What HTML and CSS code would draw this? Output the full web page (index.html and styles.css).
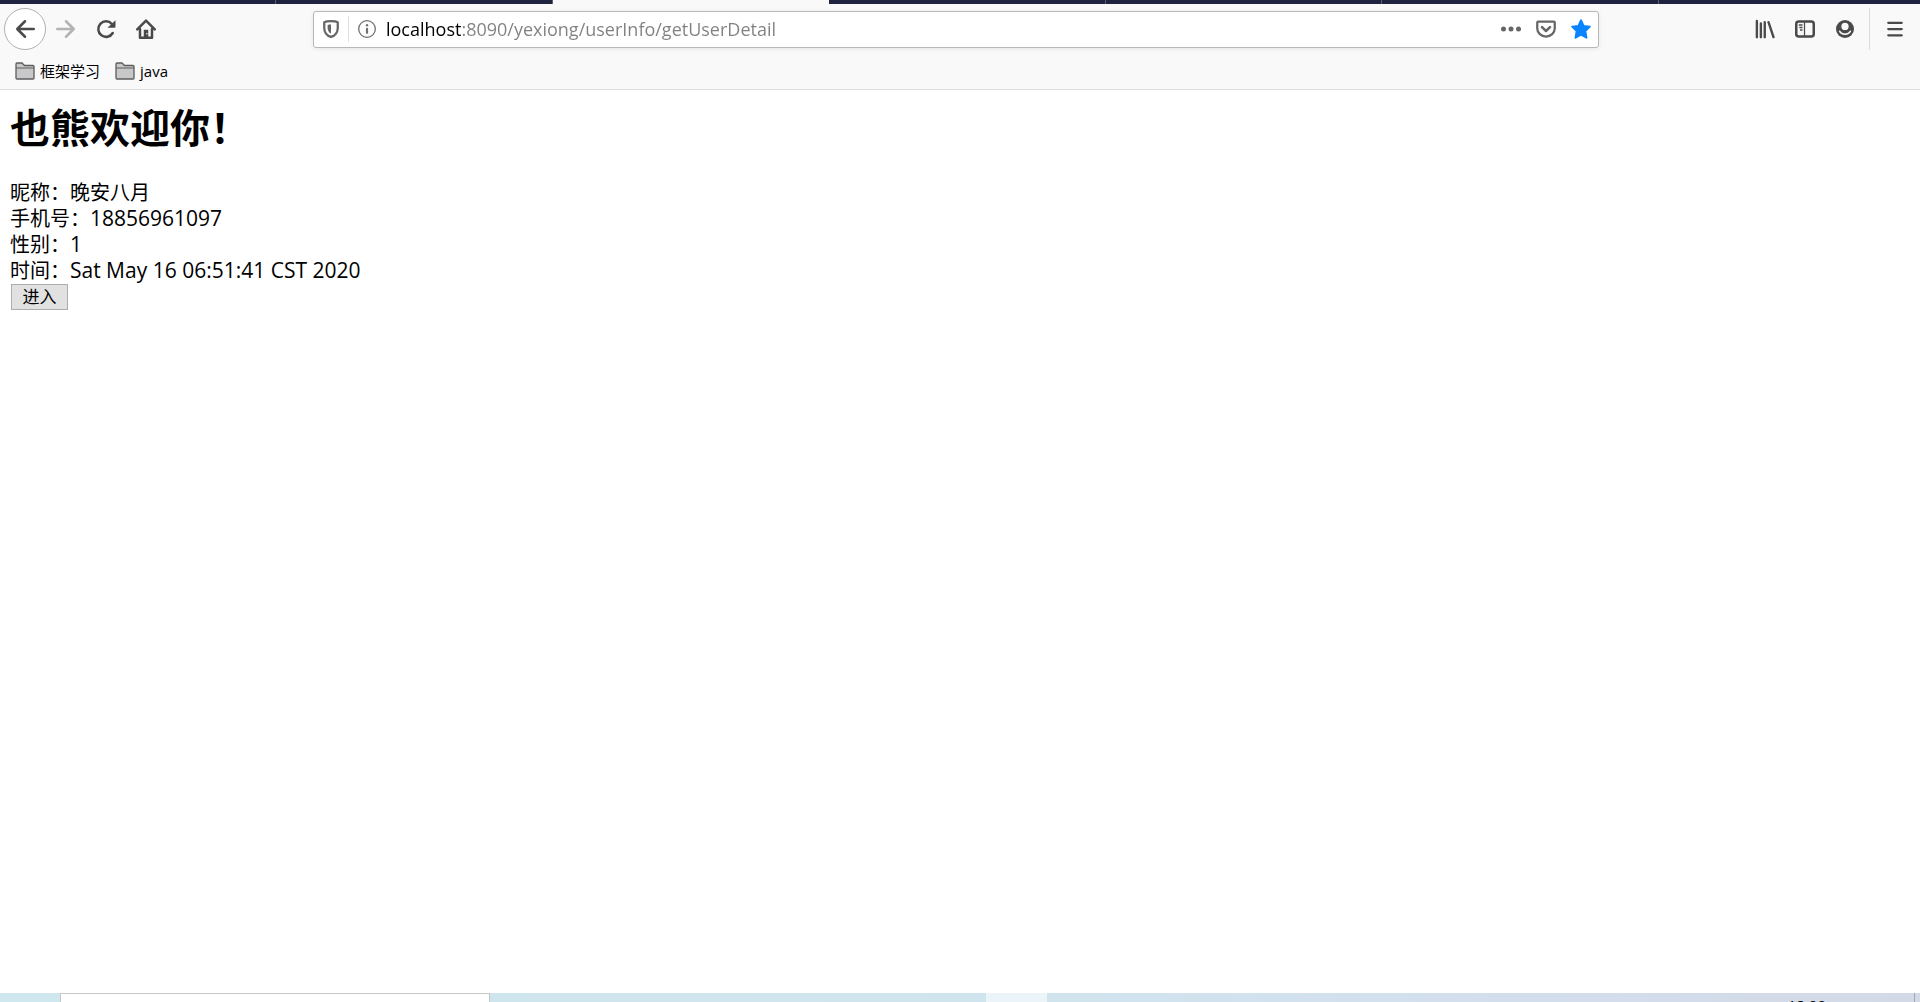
FILE: index.html
```html
<!DOCTYPE html>
<html lang="zh-CN">
<head>
    <meta charset="UTF-8">
    <meta name="viewport" content="width=device-width, initial-scale=1.0">
    <title>用户信息</title>
    <link rel="stylesheet" href="styles.css">
</head>
<body>
    <div class="tabs">
        <div class="tab"></div>
        <div class="tab"></div>
        <div class="tab active"></div>
        <div class="tab"></div>
        <div class="tab"></div>
        <div class="tab"></div>
    </div>

    <nav class="toolbar">
        <div class="nav-buttons">
            <button class="icon-btn back" aria-label="后退">
                <svg viewBox="0 0 16 16"><path d="M15 8H2M8 1.8 1.8 8 8 14.2" fill="none" stroke="#4a4a4a" stroke-width="2" stroke-linecap="round" stroke-linejoin="round"/></svg>
            </button>
            <button class="icon-btn" aria-label="前进" disabled>
                <svg viewBox="0 0 16 16"><path d="M1 8h13M8 1.8 14.2 8 8 14.2" fill="none" stroke="#b3b3b3" stroke-width="2" stroke-linecap="round" stroke-linejoin="round"/></svg>
            </button>
            <button class="icon-btn" aria-label="刷新">
                <svg viewBox="0 0 16 16"><path d="M13.4 11.2A6.2 6.2 0 1 1 12.7 4" fill="none" stroke="#4a4a4a" stroke-width="2" stroke-linecap="round"/><path d="M15.6 1v5.2a.8.8 0 0 1-.8.8H9.2z" fill="#4a4a4a"/></svg>
            </button>
            <button class="icon-btn" aria-label="主页">
                <svg viewBox="0 0 16 16"><path d="M1 8.3 8 1.3l7 7M3.2 8v7h9.6V8" fill="none" stroke="#4a4a4a" stroke-width="2" stroke-linecap="round" stroke-linejoin="round"/><path d="M6.2 8.6h3.6V15H6.2z" fill="#4a4a4a"/><circle cx="8.7" cy="11.8" r=".6" fill="#f9f9fa"/></svg>
            </button>
        </div>

        <div class="urlbar">
            <button class="url-btn shield" aria-label="跟踪保护">
                <svg viewBox="0 0 16 16"><path d="M8 1c2.600 0 4.800.3 6 .9V7c0 4-2.300 6.800-6 8C4.300 13.800 2 11 2 7V1.900C3.200 1.300 5.400 1 8 1z" fill="none" stroke="#666" stroke-width="2" stroke-linejoin="round"/><path d="M8 4v8C6 11 5 9.300 5 7V4.400C5.800 4.100 6.900 4 8 4z" fill="#666"/></svg>
            </button>
            <button class="url-btn info" aria-label="网站信息">
                <svg viewBox="0 0 18 18"><circle cx="9" cy="9" r="8.300" fill="none" stroke="#707070" stroke-width="1.300"/><circle cx="9" cy="5.300" r="1.200" fill="#707070"/><path d="M9 8.800v4" stroke="#707070" stroke-width="2.200" stroke-linecap="round"/></svg>
            </button>
            <input type="text" class="url" aria-label="地址" value="localhost:8090/yexiong/userInfo/getUserDetail">
            <button class="url-btn" aria-label="页面操作">
                <svg viewBox="0 0 16 16" fill="#666"><circle cx="2" cy="8" r="2"/><circle cx="8" cy="8" r="2"/><circle cx="14" cy="8" r="2"/></svg>
            </button>
            <button class="url-btn" aria-label="保存到 Pocket">
                <svg viewBox="0 0 16 16" fill="none" stroke="#666" stroke-linecap="round" stroke-linejoin="round"><path d="M1.800 2h12.400c.5 0 .8.300.8.800V7.500a7 6.500 0 0 1-14 0V2.800c0-.5.300-.8.800-.8z" stroke-width="1.800"/><path d="M4.800 6.500 8 9.600l3.200-3.100" stroke-width="2"/></svg>
            </button>
            <button class="url-btn" aria-label="编辑书签">
                <svg viewBox="0 0 16 16"><path d="M8 1l2.100 4.500 5 .6-3.600 3.500.9 5.400L8 12.500 3.600 15l.9-5.400L.9 6.100l5-.6z" fill="#0a84ff" stroke="#0a84ff" stroke-width="1.500" stroke-linejoin="round"/></svg>
            </button>
        </div>

        <div class="tools">
            <button class="icon-btn" aria-label="书库">
                <svg viewBox="0 0 16 16"><path d="M1.500 1.500v13M4.700 3.500v11M7.800 2.500v12M10.800 2.500l4 12" fill="none" stroke="#4a4a4a" stroke-width="1.900" stroke-linecap="round"/></svg>
            </button>
            <button class="icon-btn" aria-label="侧栏">
                <svg viewBox="0 0 16 16"><rect x="1" y="2" width="14" height="12" rx="2" fill="none" stroke="#4a4a4a" stroke-width="2"/><path d="M7.600 2v12" stroke="#4a4a4a"/><path d="M3 4.800h3M3.500 6.800H6M4 8.800h2" stroke="#4a4a4a" stroke-width="1.100"/></svg>
            </button>
            <button class="icon-btn" aria-label="账户">
                <svg viewBox="0 0 16 16"><circle cx="8" cy="8" r="7.200" fill="#4a4a4a"/><circle cx="8" cy="5.900" r="2.900" fill="#f9f9fa"/><path d="M3.700 9.800c1.400 3.100 7.200 3.100 8.600 0" fill="none" stroke="#f9f9fa" stroke-width="1.200" stroke-linecap="round"/></svg>
            </button>
            <button class="icon-btn menu" aria-label="菜单">
                <svg viewBox="0 0 16 16"><path d="M2.600 3h10.800M2.600 8h10.800M2.600 13h10.800" stroke="#4a4a4a" stroke-width="1.800" stroke-linecap="round"/></svg>
            </button>
        </div>
    </nav>

    <div class="bookmarks">
        <a class="bookmark" href="#">
            <svg viewBox="0 0 20 18"><path d="M1 16V2c0-.6.400-1 1-1h5l2.500 2.500H18c.6 0 1 .4 1 1V16c0 .6-.4 1-1 1H2c-.6 0-1-.4-1-1z" fill="#c8c8ca" stroke="#5c5c5c" stroke-width="1.300"/><path d="M1 6h18" stroke="#5c5c5c"/></svg>
            框架学习
        </a>
        <a class="bookmark" href="#">
            <svg viewBox="0 0 20 18"><path d="M1 16V2c0-.6.400-1 1-1h5l2.500 2.500H18c.6 0 1 .4 1 1V16c0 .6-.4 1-1 1H2c-.6 0-1-.4-1-1z" fill="#c8c8ca" stroke="#5c5c5c" stroke-width="1.300"/><path d="M1 6h18" stroke="#5c5c5c"/></svg>
            java
        </a>
    </div>

    <main class="page">
        <h1>也熊欢迎你！</h1>
        <div>昵称：<span>晚安八月</span></div>
        <div>手机号：<span class="latin">18856961097</span></div>
        <div>性别：<span class="latin">1</span></div>
        <div>时间：<span class="latin">Sat May 16 06:51:41 CST 2020</span></div>
        <button class="enter">进入</button>
    </main>

    <footer class="taskbar">
        <input type="text" class="search" aria-label="搜索">
        <div class="running"></div>
        <div class="clock">18:00</div>
        <div class="show-desktop"></div>
    </footer>
</body>
</html>
```

FILE: styles.css
```css
* {
    box-sizing: border-box;
}
body {
    display: flex;
    flex-direction: column;
    height: 100vh;
    margin: 0;
    overflow: hidden;
    background: #fff;
    color: #000;
    font-family: "Open Sans", "Noto Sans CJK SC", sans-serif;
}
button {
    font-family: inherit;
    cursor: pointer;
}
svg {
    display: block;
}

/* tab strip */
.tabs {
    display: flex;
    flex-shrink: 0;
    height: 4px;
    background: #202340;
}
.tab {
    width: 14.4%;
    border-right: 1px solid #5b5d73;
}
.tab.active {
    background: #f9f9fa;
    border-right: none;
}

/* navigation toolbar */
.toolbar {
    display: flex;
    flex-shrink: 0;
    align-items: center;
    height: 50px;
    padding-left: 4px;
    background: #f9f9fa;
}
.nav-buttons {
    display: flex;
    align-items: center;
    flex: 0 0 309px;
}
.tools {
    display: flex;
    align-items: center;
    justify-content: flex-end;
    flex: 0 0 321px;
}
.icon-btn {
    display: flex;
    align-items: center;
    justify-content: center;
    width: 40px;
    height: 42px;
    padding: 0;
    border: none;
    background: none;
}
.icon-btn svg {
    width: 20px;
    height: 20px;
}
.icon-btn.back {
    width: 42px;
    border: 1px solid #b1b1b1;
    border-radius: 50%;
    background: #fff;
}
.icon-btn.menu {
    width: 51px;
    margin-left: 4px;
    border-left: 1px solid #dcdcdd;
}
.urlbar {
    display: flex;
    flex: 1;
    align-items: center;
    height: 37px;
    border: 1px solid #b8b8b8;
    border-radius: 3px;
    background: #fff;
    box-shadow: 0 1px 4px rgba(0, 0, 0, 0.08);
}
.url-btn {
    display: flex;
    align-items: center;
    justify-content: center;
    width: 35px;
    height: 26px;
    padding: 0;
    border: none;
    background: none;
}
.url-btn svg {
    width: 20px;
    height: 20px;
}
.url-btn.shield {
    border-right: 1px solid #e0e0e0;
}
.url-btn.shield svg,
.url-btn.info svg {
    width: 18px;
    height: 18px;
}
/* host is black, the rest of the address grey */
.url {
    flex: 1;
    min-width: 0;
    padding: 0 2px;
    border: none;
    outline: none;
    background: linear-gradient(to right, #000 78px, #808080 78px);
    -webkit-background-clip: text;
    background-clip: text;
    color: transparent;
    font-family: inherit;
    font-size: 18px;
    line-height: 26px;
}

/* bookmarks */
.bookmarks {
    display: flex;
    flex-shrink: 0;
    align-items: center;
    gap: 15px;
    height: 36px;
    padding: 0 15px 2px;
    border-bottom: 1px solid #dedede;
    background: #f9f9fa;
}
.bookmark {
    display: flex;
    align-items: center;
    gap: 5px;
    color: #000;
    font-size: 15px;
    text-decoration: none;
}
.bookmark svg {
    width: 20px;
    height: 18px;
}

/* page */
.page {
    flex: 1;
    padding: 12px 10px;
    font-size: 20px;
    line-height: 26px;
}
.page h1 {
    margin: 0 0 26px;
    font-size: 40px;
    line-height: 52px;
}
.latin {
    font-size: 21px;
    line-height: 20px;
}
.enter {
    display: block;
    width: 57px;
    height: 26px;
    margin-left: 1px;
    padding: 0;
    border: 1px solid #adadad;
    background: #e1e1e1;
    color: #000;
    font-size: 17px;
    line-height: 24px;
}

/* taskbar */
.taskbar {
    display: flex;
    flex-shrink: 0;
    height: 9px;
    padding-left: 60px;
    overflow: hidden;
    background: linear-gradient(to right, #cfe7ef 0%, #d0e4ee 55%, #d3dfed 75%, #d3d9e7 100%);
}
.search {
    width: 430px;
    height: 40px;
    border: 1px solid #c6c6c6;
    background: #fff;
}
.running {
    width: 61px;
    margin-left: 496px;
    background: #ebf4f8;
}
.clock {
    margin-left: auto;
    padding: 2px 88px 0 0;
    font-size: 15px;
    line-height: 20px;
}
.show-desktop {
    width: 6px;
    border-left: 1px solid #a0a8b8;
}
```
